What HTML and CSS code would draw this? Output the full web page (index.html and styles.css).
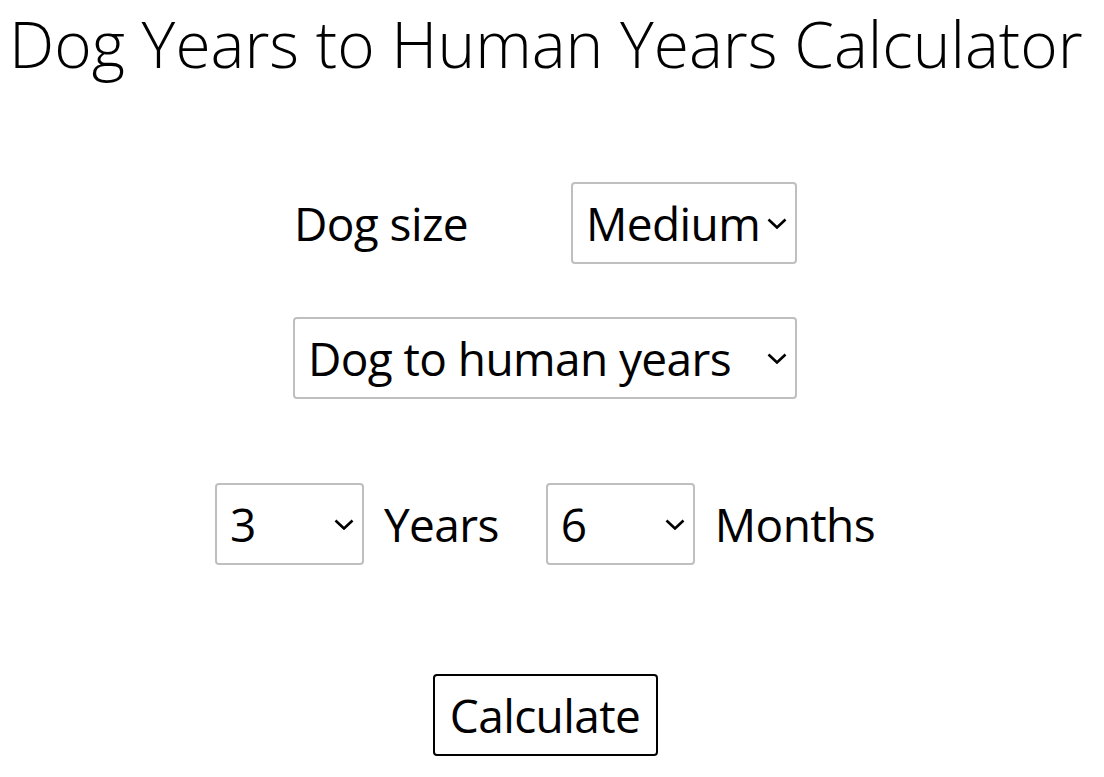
FILE: index.html
```html
<!DOCTYPE html>
<html lang="en">
<head>
  <meta charset="UTF-8">
  <meta name="viewport" content="width=device-width, initial-scale=1.0">
  <title>Dog Years to Human Years Calculator</title>
  <link rel="stylesheet" href="styles.css">
</head>
<body>
  <h1 class="title">Dog Years to Human Years Calculator</h1>

  <form class="calc">
    <div class="row size-row">
      <label for="dogSize">Dog size</label>
      <div class="select-wrap size-select">
        <select id="dogSize">
          <option>Small</option>
          <option selected>Medium</option>
          <option>Large</option>
        </select>
        <svg class="chevron" viewBox="0 0 20 11"><polyline points="1.5,1.5 10,9.5 18.5,1.5"/></svg>
      </div>
    </div>

    <div class="row">
      <div class="select-wrap mode-select">
        <select id="mode">
          <option selected>Dog to human years</option>
          <option>Human to dog years</option>
        </select>
        <svg class="chevron" viewBox="0 0 20 11"><polyline points="1.5,1.5 10,9.5 18.5,1.5"/></svg>
      </div>
    </div>

    <div class="row age-row">
      <div class="select-wrap num-select">
        <select id="years">
          <option>0</option><option>1</option><option>2</option>
          <option selected>3</option><option>4</option><option>5</option>
        </select>
        <svg class="chevron" viewBox="0 0 20 11"><polyline points="1.5,1.5 10,9.5 18.5,1.5"/></svg>
      </div>
      <span class="unit years-unit">Years</span>
      <div class="select-wrap num-select">
        <select id="months">
          <option>0</option><option>3</option>
          <option selected>6</option><option>9</option>
        </select>
        <svg class="chevron" viewBox="0 0 20 11"><polyline points="1.5,1.5 10,9.5 18.5,1.5"/></svg>
      </div>
      <span class="unit">Months</span>
    </div>

    <div class="row button-row">
      <button type="button" class="calc-btn">Calculate</button>
    </div>
  </form>
</body>
</html>
```

FILE: styles.css
```css
body {
  margin: 0;
  font-family: "Open Sans", "Noto Sans", sans-serif;
  color: #000;
  background: #fff;
}
.title {
  margin: 0 0 0 9px;
  font-size: 64px;
  font-weight: 300;
  line-height: normal;
  white-space: nowrap;
}
.calc {
  width: 504px;
  margin: 95px 0 0 calc(50% - 259px);
  font-size: 46px;
  letter-spacing: -0.6px;
}
.row {
  display: flex;
  align-items: center;
  justify-content: center;
}
.size-row {
  justify-content: space-between;
  margin-bottom: 53px;
}
.size-row label {
  padding-left: 1px;
}
.age-row {
  margin-top: 84px;
  gap: 20px;
}
.years-unit {
  margin-right: 27px;
}
.button-row {
  margin-top: 109px;
}
.select-wrap {
  position: relative;
  flex-shrink: 0;
  height: 82px;
}
.select-wrap select {
  appearance: none;
  -webkit-appearance: none;
  box-sizing: border-box;
  width: 100%;
  height: 82px;
  margin: 0;
  padding: 0 36px 0 13px;
  border: 2px solid #bfbfbf;
  border-radius: 4px;
  background: #fff;
  color: #000;
  font: inherit;
  letter-spacing: inherit;
}
.size-select { width: 226px; }
.mode-select { width: 504px; }
.num-select { width: 149px; }
.chevron {
  position: absolute;
  right: 10px;
  top: 36px;
  width: 20px;
  height: 11px;
  fill: none;
  stroke: #000;
  stroke-width: 2.6;
  pointer-events: none;
}
.calc-btn {
  box-sizing: border-box;
  width: 225px;
  height: 82px;
  padding: 0;
  border: 2px solid #000;
  border-radius: 4px;
  background: #fff;
  color: #000;
  font: inherit;
  letter-spacing: inherit;
}
```
